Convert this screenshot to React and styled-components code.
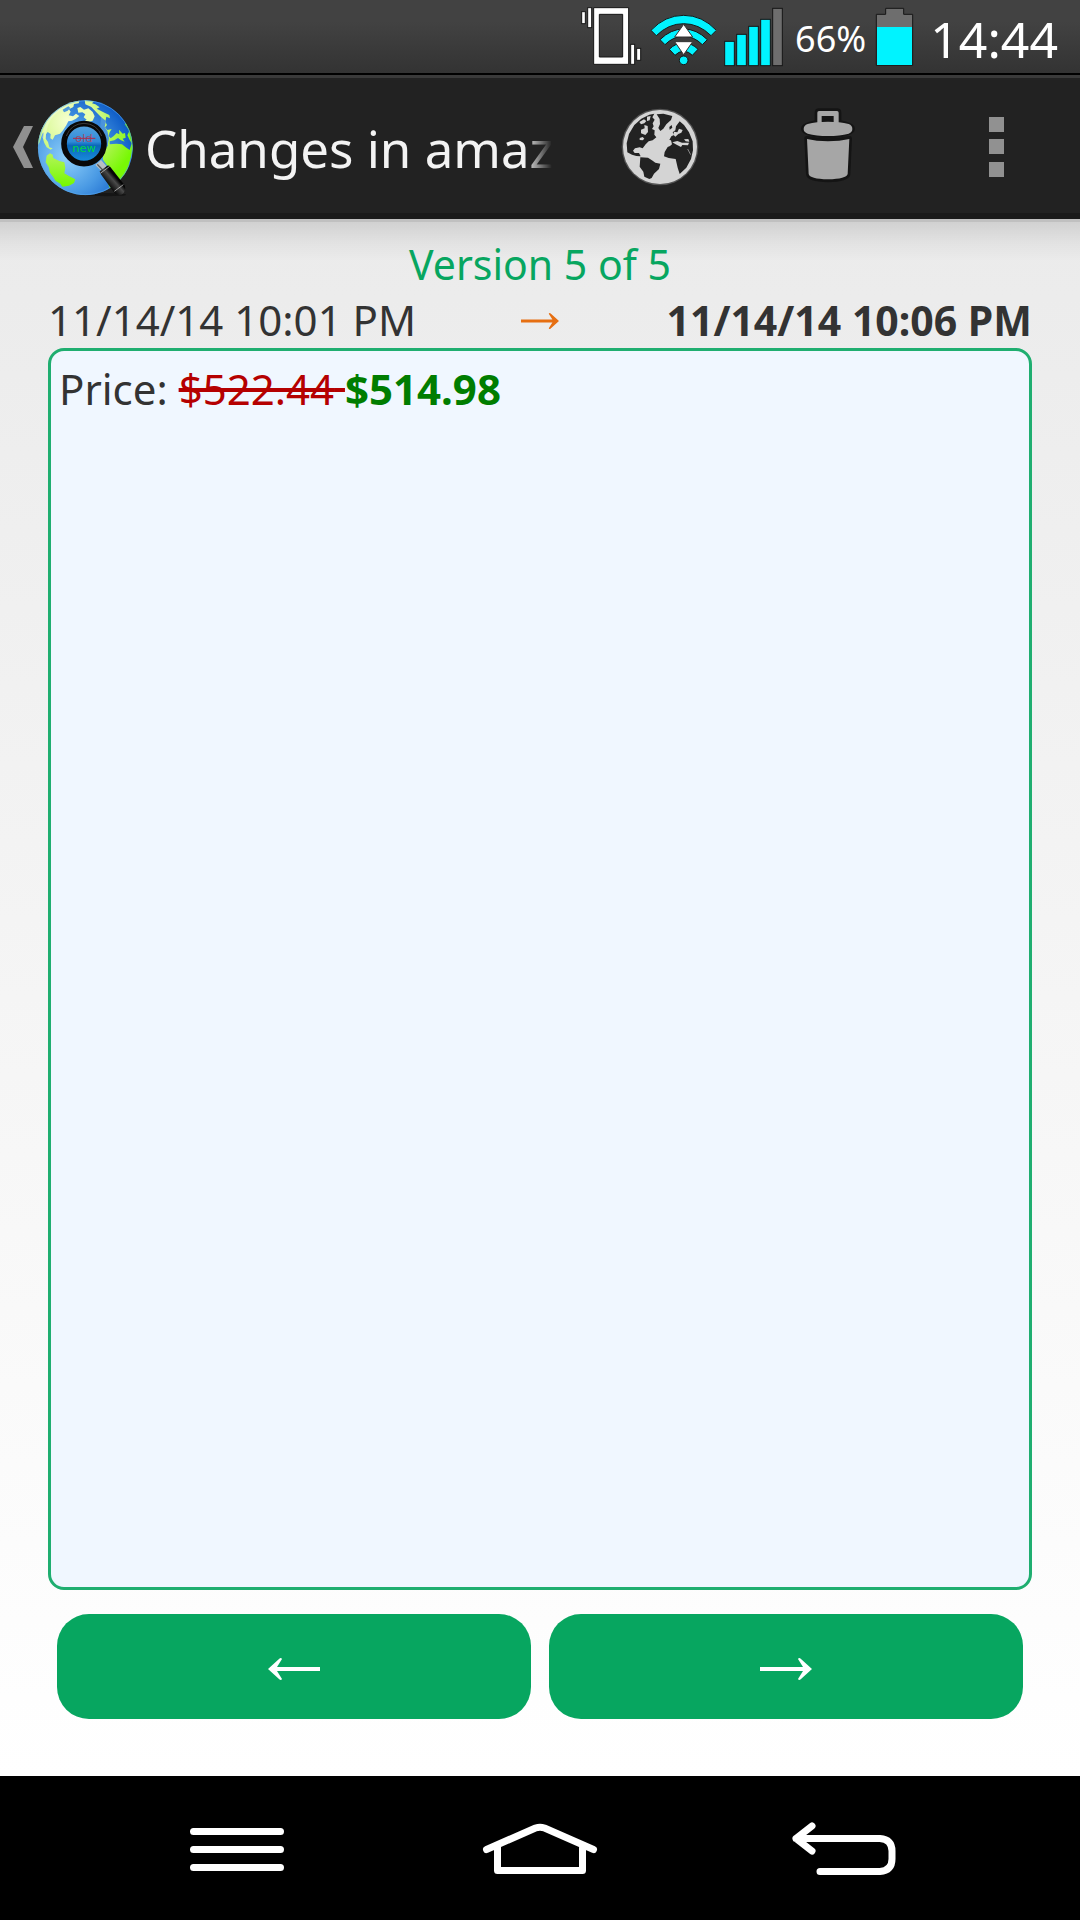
import React from 'react'
import { useState } from 'react'
import styled, { createGlobalStyle } from 'styled-components'

const versions=[
    {from:"11/14/14 10:01 PM", to:"11/14/14 10:06 PM", label:"Price:", before:"$522.44", after:"$514.98"},
]

const VibrateIcon=()=>(
    <svg width="62" height="60" viewBox="60 24 186 180" aria-hidden="true">
        <g fill="#fff" stroke="#161616" strokeWidth="3">
            <rect x="65" y="38" width="11" height="36" />
            <rect x="83" y="26" width="12" height="60" />
            <rect x="212" y="136" width="12" height="60" />
            <rect x="230" y="148" width="12" height="36" />
            <path fillRule="evenodd" d="M101 26H206V196H101ZM118 46V174H188V46Z" />
        </g>
    </svg>
)

const WifiIcon=()=>(
    <svg width="66" height="60" viewBox="270 24 198 180" aria-hidden="true">
        <g fill="#00f3ff" stroke="#161616" strokeWidth="3">
            <path d="M273 94Q315 49 371 49Q427 49 469 94L453 110Q417 74 371 74Q325 74 289 110Z" />
            <path d="M300 122Q332 90 371 90Q410 90 442 122L427 137Q402 112 371 112Q340 112 315 137Z" />
            <path d="M328 151Q346 132 371 132Q396 132 414 151L397 169Q386 157 371 157Q356 157 345 169Z" />
            <circle cx="371" cy="184" r="13" />
        </g>
        <g fill="#fff" stroke="#333" strokeWidth="3">
            <path d="M371 76L398 114H344Z" />
            <path d="M344 128H398L371 167Z" />
        </g>
    </svg>
)

const SignalIcon=()=>(
    <svg width="60" height="60" viewBox="492 24 180 180" aria-hidden="true">
        <g fill="#00f3ff" stroke="#161616" strokeWidth="3">
            <rect x="494" y="127" width="29" height="73" />
            <rect x="530" y="106" width="29" height="94" />
            <rect x="566" y="82" width="29" height="118" />
            <rect x="602" y="61" width="29" height="139" />
            <rect x="638" y="28" width="29" height="172" fill="#6e6e6e" />
        </g>
    </svg>
)

const BatteryIcon=()=>(
    <svg width="41" height="60" viewBox="282 24 123 180" aria-hidden="true">
        <path d="M317 28H371V46H398V199H289V46H317Z" fill="#6e6e6e" stroke="#161616" strokeWidth="3" />
        <rect x="291" y="84" width="105" height="114" fill="#00f3ff" />
    </svg>
)

const UpIcon=()=>(
    <svg width="20" height="42" viewBox="0 0 20 42" aria-hidden="true">
        <path d="M11 0H20L10 21L20 42H11L0 21Z" fill="#909090" />
    </svg>
)

const AppLogo=()=>(
    <svg width="99" height="99" viewBox="108 81 297 297" aria-hidden="true">
        <defs>
            <radialGradient id="sea" cx="0.3" cy="0.6" r="0.75">
                <stop offset="0" stopColor="#8fd0fa" />
                <stop offset="0.5" stopColor="#4a9ae4" />
                <stop offset="1" stopColor="#0755c4" />
            </radialGradient>
            <radialGradient id="land" gradientUnits="userSpaceOnUse" cx="205" cy="150" r="210">
                <stop offset="0" stopColor="#f6ffd2" />
                <stop offset="0.35" stopColor="#dcfa9c" />
                <stop offset="0.75" stopColor="#a0f53c" />
                <stop offset="1" stopColor="#78f804" />
            </radialGradient>
            <linearGradient id="south" x1="0" y1="0" x2="0" y2="1">
                <stop offset="0" stopColor="#b4f55a" />
                <stop offset="1" stopColor="#74f800" />
            </linearGradient>
            <linearGradient id="lens" x1="0" y1="0" x2="0" y2="1">
                <stop offset="0" stopColor="#5aa5e0" />
                <stop offset="0.45" stopColor="#2f8bd8" />
                <stop offset="0.55" stopColor="#0a66b8" />
                <stop offset="1" stopColor="#1a92e2" />
            </linearGradient>
            <linearGradient id="handle" x1="0" y1="1" x2="1" y2="0">
                <stop offset="0.3" stopColor="#000" />
                <stop offset="0.52" stopColor="#4a4a4a" />
                <stop offset="0.62" stopColor="#050505" />
            </linearGradient>
            <clipPath id="globe"><circle cx="256" cy="230" r="142" /></clipPath>
        </defs>
        <ellipse cx="320" cy="371" rx="58" ry="5" fill="#151515" />
        <circle cx="256" cy="230" r="142" fill="url(#sea)" />
        <g clipPath="url(#globe)">
            <path fill="url(#land)" d="M110 230L112 160L165 100L240 84L236 97L222 99L220 108L207 115L212 122L206 133L219 136L228 128L238 135L228 143L216 149L205 151L199 163L188 179L180 188L165 193L158 206L151 202L152 189L143 183L138 190L137 203L144 213L148 229L158 232L152 236L140 229L133 216L129 204L131 184L127 188L119 214Z" />
            <path fill="#eaffb0" d="M232 111L241 108L252 116L265 112L278 123L284 136L278 149L264 154L250 153L260 146L251 139L256 130L247 124L235 125Z" />
            <path fill="#4e99dc" d="M188 116L205 106L211 111L203 119L192 124Z" />
            <path fill="url(#land)" d="M254 87L282 91L276 97L286 100L299 109L290 113L315 126L328 132L330 142L319 137L316 152L321 162L315 169L322 177L335 174L329 184L326 195L332 202L341 195L350 186L358 190L357 176L368 188L375 186L377 200L368 203L374 212L363 208L354 201L343 208L329 211L329 220L349 218L366 220L379 230L389 237L395 217L389 207L382 193L388 180L400 230L380 310L335 365L327 345L320 326L327 305L324 287L309 266L309 240L324 224L316 200L306 178L312 159L303 138L289 124L274 108L256 100Z" />
            <path fill="#4b93dc" d="M303 138L318 150L314 168L322 180L327 202L322 226L306 200L300 175Z" />
            <path fill="#67dc15" d="M372 130L386 145L396 175L398 215L391 203L386 176L374 160L380 153Z" />
            <path fill="url(#south)" d="M140 254L150 247L158 251L160 261L178 270L193 274L196 290L193 307L207 315L226 325L222 336L207 344L187 347L181 338L167 330L160 319L150 305L146 288L137 274Z" />
            <path fill="#fff" opacity="0.25" d="M126 200Q135 115 222 99Q177 112 153 145Q137 172 137 208Z" />
        </g>
        <circle cx="256" cy="230" r="141" fill="none" stroke="#58a8ed" strokeOpacity="0.6" strokeWidth="3" />
        <circle cx="252" cy="218" r="60" fill="url(#lens)" stroke="#080808" strokeWidth="17" />
        <path d="M199 195Q213 158 252 157Q291 158 305 195" fill="none" stroke="#3c3c3c" strokeWidth="3" />
        <LensText x="252" y="212" fill="#a0506e">old</LensText>
        <path d="M219 202H286" stroke="#b02b48" strokeWidth="3" />
        <LensText x="252" y="243" fill="#00d648">new</LensText>
        <path d="M286 282L303 267L320 286L304 300Z" fill="#b9bec2" />
        <path d="M292 280L308 297" stroke="#555" strokeWidth="4" />
        <path d="M299 301L322 284Q328 283 331 288L374 343Q379 358 369 368Q357 376 344 367L302 309Z" fill="url(#handle)" />
        <path d="M301 307L329 286M343 361L370 341" stroke="#ddd" strokeWidth="2" />
    </svg>
)

const WorldIcon=()=>(
    <svg width="78" height="78" viewBox="93 84 234 234" aria-hidden="true">
        <circle cx="210" cy="201" r="115" fill="#777" opacity="0.6" />
        <circle cx="210" cy="201" r="111" fill="#d4d4d4" />
        <g fill="#222">
            <path d="M112 217L110 190L117 162L133 135L154 116L178 104L193 101L187 112L194 119L188 130L191 139L186 147L194 151L193 164L199 172L188 181L176 184L167 193L158 205L149 202L135 205L129 212L134 219L147 219L152 229L139 228L126 224Z" />
            <path d="M200 103L220 101L247 108L243 120L229 133L220 146L211 153L205 144L210 132L209 117Z" />
            <path d="M269 124L282 135L297 157L308 184L309 211L303 237L289 263L269 282L263 263L257 237L236 234L222 229L224 216L233 201L240 198L246 193L243 181L238 180L244 169L252 165L248 157L256 151L258 139Z" />
            <path d="M151 232L174 233L188 242L196 248L211 251L207 267L192 281L185 294L178 297L163 290L160 275L149 260Z" />
            <path d="M238 141L245 135L247 143L239 149Z" />
        </g>
        <g fill="#d4d4d4">
            <path d="M153 149L164 145L163 135L173 138L174 156L166 165L153 160Z" />
            <path d="M148 126L162 118L169 123L163 130L153 133ZM171 110L182 108L179 121L171 123Z" />
            <path d="M149 174L158 171L163 176L158 181L149 180Z" />
            <path d="M247 187L262 183L276 188L297 188L294 196L277 195L273 201L257 193Z" />
            <path d="M282 178L295 177L298 185L287 184ZM252 155L262 157L267 146L278 150L274 158L265 162L256 170L250 164Z" />
        </g>
        <path d="M293 207L302 224" stroke="#888" strokeWidth="3" />
    </svg>
)

const TrashIcon=()=>(
    <svg width="56" height="78" viewBox="631 84 168 234" aria-hidden="true">
        <g stroke="#141414" strokeWidth="16" strokeLinejoin="round" fill="#141414">
            <path d="M683 130V98Q683 93 688 93H742Q747 93 747 98V130Z" />
            <ellipse cx="715" cy="146" rx="73" ry="20" />
            <path d="M652 176Q715 190 779 176L774 283Q770 298 715 299Q660 298 657 283Z" />
        </g>
        <g fill="#a6a6a6">
            <path fillRule="evenodd" d="M683 132V98Q683 93 688 93H742Q747 93 747 98V132ZM696 108V126H732V108Z" />
            <path d="M642 147Q642 136 654 132Q680 125 715 125Q750 125 777 132Q788 136 788 147Q788 157 777 161Q750 168 715 168Q680 168 654 161Q642 157 642 147Z" />
            <path d="M652 177Q680 184 715 184Q750 184 779 177L774 282Q770 297 715 298Q660 297 657 282Z" />
        </g>
    </svg>
)

const MoreIcon=()=>(
    <svg width="15" height="60" viewBox="0 0 15 60" aria-hidden="true">
        <path d="M0 0H15V15H0ZM0 22H15V37H0ZM0 45H15V60H0Z" fill="#919191" />
    </svg>
)

// points right, "back" turns it round
const Arrow=({width, back})=>(
    <svg width={width} height={width*22/52} viewBox="0 0 52 22" fill="currentColor" aria-hidden="true">
        <g transform={back ? "rotate(180 26 11)" : undefined}>
            <path d="M0 9H43L38 1Q39 -1 41 1L52 11L41 21Q39 23 38 21L43 13H0Z" />
        </g>
    </svg>
)

const NavIcon=({d})=>(
    <svg width="120" height="60" viewBox="0 0 120 60" fill="none" stroke="#fff" strokeWidth="7" strokeLinecap="round" strokeLinejoin="round" aria-hidden="true">
        <path d={d} />
    </svg>
)

function App() {
    const[current, setcurrent]=useState(0)
    const version=versions[current]

    const handlemove=(step)=>{
        setcurrent(Math.min(versions.length-1, Math.max(0, current+step)))
    }

  return (
    <Container>
        <GlobalStyle />

        <StatusBar>
            <VibrateIcon />
            <WifiIcon />
            <SignalIcon />
            <Percent>66%</Percent>
            <BatteryIcon />
            <Clock>14:44</Clock>
        </StatusBar>

        <ActionBar>
            <HomeLink href="#" aria-label="Navigate up">
                <UpIcon />
                <AppLogo />
            </HomeLink>
            <Title>Changes in amaz</Title>
            <ActionButton type="button" aria-label="Open page"><WorldIcon /></ActionButton>
            <ActionButton type="button" aria-label="Delete"><TrashIcon /></ActionButton>
            <ActionButton type="button" aria-label="More options"><MoreIcon /></ActionButton>
        </ActionBar>

        <Content>
            <VersionLabel>Version 5 of 5</VersionLabel>
            <Dates>
                <DateText>{version.from}</DateText>
                <DateArrow><Arrow width={38} /></DateArrow>
                <DateText $current>{version.to}</DateText>
            </Dates>
            <Changes>
                {version.label} <Removed>{version.before} </Removed><Added>{version.after}</Added>
            </Changes>
            <Pager>
                <PagerButton type="button" aria-label="Previous version" onClick={()=>handlemove(-1)}><Arrow width={52} back /></PagerButton>
                <PagerButton type="button" aria-label="Next version" onClick={()=>handlemove(1)}><Arrow width={52} /></PagerButton>
            </Pager>
        </Content>

        <NavBar>
            <NavButton type="button" aria-label="Menu">
                <NavIcon d="M16.5 13.5H103.5M16.5 31.5H103.5M16.5 49.5H103.5" />
            </NavButton>
            <NavButton type="button" aria-label="Home">
                <NavIcon d="M6.5 31.5L55.5 10Q60 8.5 64.5 10L113.5 31.5M17.5 28V52.5H102.5V28" />
            </NavButton>
            <NavButton type="button" aria-label="Back">
                <NavIcon d="M29 8L13 20.5L29 33M13 20.5H97Q109 21.5 109 33V41Q109 52.5 97 53.5H37" />
            </NavButton>
        </NavBar>
    </Container>
  )
}

const GlobalStyle=createGlobalStyle`
*{
    box-sizing: border-box;
}
body{
    margin: 0;
    font-family: "Noto Sans", "Open Sans", sans-serif;
}
svg{
    display: block;
    flex-shrink: 0;
}
button{
    border: none;
    padding: 0;
    background: none;
    cursor: pointer;
}
`;

const LensText=styled.text`
font-family: "DejaVu Sans", sans-serif;
font-size: 34px;
text-anchor: middle;
`;

const Container=styled.div`
display: flex;
flex-direction: column;
min-height: 100vh;
`;

const StatusBar=styled.div`
display: flex;
align-items: center;
justify-content: flex-end;
gap: 8px;
height: 75px;
padding-right: 22px;
color: #fff;
background: linear-gradient(#424242, #424242 30%, #333);
border-bottom: 2px solid #000;
`;

const Percent=styled.span`
padding: 4px 0 0 3px;
font-size: 36px;
line-height: 60px;
`;

const Clock=styled.span`
padding: 4px 0 0 7px;
font-size: 50px;
line-height: 60px;
`;

const ActionBar=styled.header`
display: flex;
align-items: center;
height: 144px;
background: #222;
box-shadow: inset 0 3px #3a3a3a, inset 0 -6px #1a1a1a;
`;

const HomeLink=styled.a`
display: flex;
align-items: center;
gap: 3px;
padding-left: 13px;
`;

const Title=styled.h1`
flex: 1;
min-width: 0;
margin: 0 24px 0 10px;
padding-top: 2px;
overflow: hidden;
white-space: nowrap;
font-size: 51px;
font-weight: 400;
line-height: 72px;
color: #f3f3f3;
mask-image: linear-gradient(to left, transparent, #000 28px);
`;

const ActionButton=styled.button`
display: flex;
align-items: center;
justify-content: center;
width: 168px;
height: 100%;
`;

const Content=styled.main`
display: flex;
flex: 1;
flex-direction: column;
padding: 17px 48px 57px;
color: #333;
background:
    linear-gradient(#c0c0c0, #c0c0c0) top / 100% 3px no-repeat,
    linear-gradient(#0000001f, #0000000a 24px, transparent 42px),
    linear-gradient(#ebebeb, #fff);
`;

const VersionLabel=styled.h2`
margin: 0;
text-align: center;
font-size: 41px;
font-weight: 400;
line-height: 56px;
color: #07a660;
`;

const Dates=styled.div`
display: grid;
grid-template-columns: 1fr auto 1fr;
align-items: center;
`;

const DateText=styled.span`
font-size: ${(props)=>props.$current ? "41px" : "42px"};
font-weight: ${(props)=>props.$current ? 700 : 400};
text-align: ${(props)=>props.$current ? "right" : "left"};
line-height: 56px;
white-space: nowrap;
`;

const DateArrow=styled.span`
padding-top: 2px;
color: #e66f12;
`;

const Changes=styled.section`
flex: 1;
margin-bottom: 24px;
padding: 10px 8px;
border: 3px solid #1fae70;
border-radius: 16px;
background: #f0f7ff;
font-size: 42px;
line-height: 56px;
`;

const Removed=styled.del`
color: #b50000;
`;

const Added=styled.ins`
color: #007d00;
font-weight: 700;
text-decoration: none;
`;

const Pager=styled.div`
display: flex;
gap: 18px;
padding: 0 9px;
`;

const PagerButton=styled.button`
display: flex;
flex: 1;
align-items: center;
justify-content: center;
height: 105px;
padding-top: 4px;
border-radius: 32px;
color: #fff;
background: #07a660;
`;

const NavBar=styled.nav`
display: flex;
height: 144px;
padding: 0 85px;
background: #000;
`;

const NavButton=styled.button`
display: flex;
flex: 1;
align-items: center;
justify-content: center;
`;

export default App
